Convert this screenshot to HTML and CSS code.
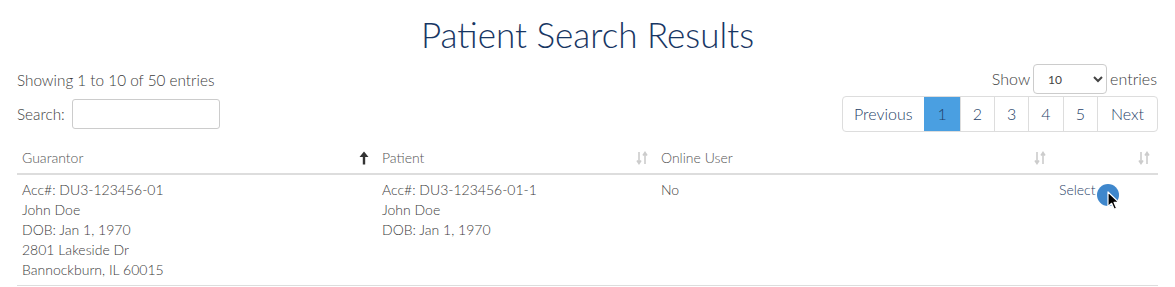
FILE: index.html
```html
<!DOCTYPE html>
<html>
<head>
<meta charset="utf-8">
<link rel="stylesheet" href="styles.css">
</head>
<body>
<div class="page">
  <h1 class="title">Patient Search Results</h1>
  <div class="controls">
    <div class="left">
      <div class="info">Showing 1 to 10 of 50 entries</div>
      <label class="search">Search: <input type="text" class="search-input"></label>
    </div>
    <div class="right">
      <label class="length">Show <select class="length-select"><option>10</option><option>25</option></select> entries</label>
      <ul class="pager">
        <li class="pg prev">Previous</li>
        <li class="pg active">1</li>
        <li class="pg">2</li>
        <li class="pg">3</li>
        <li class="pg">4</li>
        <li class="pg">5</li>
        <li class="pg next">Next</li>
      </ul>
    </div>
  </div>
  <table class="results">
    <colgroup>
      <col class="c1"><col class="c2"><col class="c3"><col class="c4">
    </colgroup>
    <thead>
      <tr>
        <th><div class="th-in"><span>Guarantor</span>
          <svg class="sort" width="10" height="14" viewBox="0 0 10 14"><path d="M5 0.5 L9.5 6 L6.2 6 L6.2 13.5 L3.8 13.5 L3.8 6 L0.5 6 Z" fill="#333"/></svg></div></th>
        <th><div class="th-in"><span>Patient</span>
          <svg class="sort" width="12" height="14" viewBox="0 0 12 14"><path d="M3 1 V12 M1 9.5 L3 12.5 L5 9.5 M9 13 V2 M7 4.5 L9 1.5 L11 4.5" stroke="#ccc" stroke-width="1.6" fill="none"/></svg></div></th>
        <th><div class="th-in"><span>Online User</span>
          <svg class="sort" width="12" height="14" viewBox="0 0 12 14"><path d="M3 1 V12 M1 9.5 L3 12.5 L5 9.5 M9 13 V2 M7 4.5 L9 1.5 L11 4.5" stroke="#ccc" stroke-width="1.6" fill="none"/></svg></div></th>
        <th><div class="th-in"><span></span>
          <svg class="sort" width="12" height="14" viewBox="0 0 12 14"><path d="M3 1 V12 M1 9.5 L3 12.5 L5 9.5 M9 13 V2 M7 4.5 L9 1.5 L11 4.5" stroke="#ccc" stroke-width="1.6" fill="none"/></svg></div></th>
      </tr>
    </thead>
    <tbody>
      <tr>
        <td>Acc#: DU3-123456-01<br>John Doe<br>DOB: Jan 1, 1970<br>2801 Lakeside Dr<br>Bannockburn, IL 60015</td>
        <td>Acc#: DU3-123456-01-1<br>John Doe<br>DOB: Jan 1, 1970</td>
        <td>No</td>
        <td><span class="select-wrap"><a class="select-link">Select</a><span class="click-dot"></span>
          <svg class="cursor" width="14" height="20" viewBox="0 0 14 20"><path d="M1 1 L1 15.5 L4.6 12.3 L7.2 18.3 L9.6 17.2 L7.1 11.4 L11.8 11.4 Z" fill="#000" stroke="#fff" stroke-width="1.2" stroke-linejoin="round"/></svg></span></td>
      </tr>
    </tbody>
  </table>
</div>
</body>
</html>
```

FILE: styles.css
```css
* { box-sizing: border-box; }
html, body { margin: 0; padding: 0; background: #fff; }
body {
  font-family: Lato, "Open Sans", "Liberation Sans", sans-serif;
  font-weight: 300;
  font-size: 14px;
  line-height: 20px;
  color: #3c3c3c;
}
.page { padding: 0 17px; }
.title {
  margin: 0;
  padding-top: 12px;
  height: 64px;
  text-align: center;
  font-weight: 300;
  font-size: 35px;
  line-height: 44px;
  color: #173663;
}
.controls {
  display: flex;
  justify-content: space-between;
  align-items: flex-start;
}
.left { display: flex; flex-direction: column; padding-top: 6px; font-size: 15.3px; }
.info { height: 20px; }
.search { display: flex; align-items: center; gap: 7px; margin-top: 9px; }
.search-input {
  width: 148px;
  height: 30px;
  border: 1px solid #ccc;
  border-radius: 3px;
  font: inherit;
}
.right { display: flex; flex-direction: column; align-items: flex-end; font-size: 16px; }
.length { display: flex; align-items: center; gap: 3px; height: 30px; margin-right: 1px; }
.length-select {
  width: 74px;
  height: 30px;
  border: 1px solid #ccc;
  border-radius: 4px;
  background: #fff;
  font-family: Lato, sans-serif;
  font-size: 12px;
  color: #444;
  padding-left: 10px;
}
.pager {
  list-style: none;
  margin: 2px 0 0;
  padding: 0;
  display: flex;
  border: 1px solid #ddd;
  border-radius: 4px;
  overflow: hidden;
}
.pg {
  height: 34px;
  line-height: 34px;
  padding: 0 12px;
  text-align: center;
  color: #1f3f68;
  font-size: 16px;
  font-weight: 300;
  border-left: 1px solid #ddd;
}
.pg:first-child { border-left: none; }
.pg.prev { padding: 0 11px 0 11px; }
.pg.active { padding: 0 13px; background: #4a9fe1; color: #1f3f68; border-left-color: #4a9fe1; }
.pg.next { padding: 0 13px 0 13px; }
.results {
  width: 100%;
  margin-top: 11px;
  border-collapse: collapse;
  table-layout: fixed;
}
.c1 { width: 360px; }
.c2 { width: 279px; }
.c3 { width: 398px; }
.c4 { width: 104px; }
.results th {
  font-weight: 300;
  color: #555;
  text-align: left;
  padding: 5px 8px 5px 5px;
  border-bottom: 2px solid #ddd;
}
.th-in { display: flex; justify-content: space-between; align-items: center; height: 20px; }
.sort { display: block; }
.results td {
  vertical-align: top;
  padding: 5px 5px 5px;
  border-bottom: 1px solid #ddd;
}
.select-wrap { position: relative; display: inline-block; }
.select-link { color: #1f3f68; text-decoration: none; }
.click-dot {
  position: absolute;
  left: 38px;
  top: 4px;
  width: 22px;
  height: 22px;
  border-radius: 50%;
  background: #3f87cc;
}
.cursor { position: absolute; left: 48px; top: 11px; }
```
